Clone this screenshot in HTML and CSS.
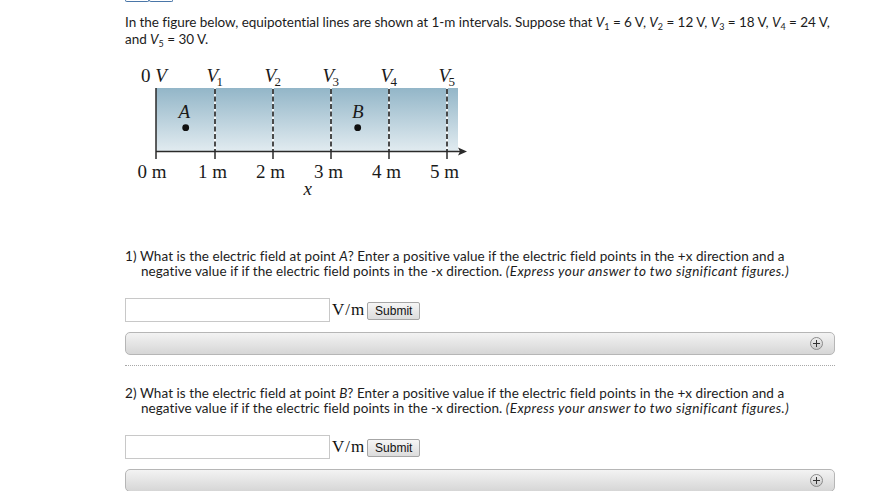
FILE: index.html
```html
<!DOCTYPE html>
<html>
<head>
<meta charset="utf-8">
<link rel="stylesheet" href="styles.css">
</head>
<body>
<div class="page">
  <div class="tabs"><span class="tab"></span><span class="tab"></span></div>
  <p class="intro">In the figure below, equipotential lines are shown at 1-m intervals. Suppose that <i>V</i><sub>1</sub> = 6 V, <i>V</i><sub>2</sub> = 12 V, <i>V</i><sub>3</sub> = 18 V, <i>V</i><sub>4</sub> = 24 V,<br>and <i>V</i><sub>5</sub> = 30 V.</p>

  <svg class="figure" width="350" height="145" viewBox="125 58 350 145" xmlns="http://www.w3.org/2000/svg">
    <defs>
      <linearGradient id="band" x1="0" y1="0" x2="0" y2="1">
        <stop offset="0" stop-color="#93b6c8"/>
        <stop offset="1" stop-color="#e1ebf0"/>
      </linearGradient>
    </defs>
    <rect x="156" y="88" width="302" height="63" fill="url(#band)"/>
    <g stroke="#ffffff" stroke-width="1.6">
      <line x1="215" y1="88" x2="215" y2="151"/>
      <line x1="273" y1="88" x2="273" y2="151"/>
      <line x1="331" y1="88" x2="331" y2="151"/>
      <line x1="389" y1="88" x2="389" y2="151"/>
      <line x1="447" y1="88" x2="447" y2="151"/>
    </g>
    <g stroke="#1e1e1e" stroke-width="1.6" stroke-dasharray="5 2.5">
      <line x1="215" y1="89" x2="215" y2="151"/>
      <line x1="273" y1="89" x2="273" y2="151"/>
      <line x1="331" y1="89" x2="331" y2="151"/>
      <line x1="389" y1="89" x2="389" y2="151"/>
      <line x1="447" y1="89" x2="447" y2="151"/>
    </g>
    <g stroke="#2a2a2a" stroke-width="1.5" fill="none">
      <line x1="156" y1="88" x2="156" y2="159"/>
      <line x1="156" y1="151.5" x2="461" y2="151.5"/>
      <line x1="215" y1="151" x2="215" y2="159"/>
      <line x1="273" y1="151" x2="273" y2="159"/>
      <line x1="331" y1="151" x2="331" y2="159"/>
      <line x1="389" y1="151" x2="389" y2="159"/>
      <line x1="447" y1="151" x2="447" y2="159"/>
    </g>
    <path d="M467 151.5 L458 147.5 L460 151.5 L458 155.5 Z" fill="#2a2a2a"/>
    <circle cx="185.7" cy="127.7" r="3.4" fill="#111"/>
    <circle cx="357.7" cy="127.7" r="3.4" fill="#111"/>
    <g class="fig-text">
      <text x="141" y="81.5">0 <tspan font-style="italic">V</tspan></text>
      <text x="206.5" y="81.5"><tspan font-style="italic">V</tspan><tspan class="fsub" dx="-1.5" dy="4">1</tspan></text>
      <text x="264.5" y="81.5"><tspan font-style="italic">V</tspan><tspan class="fsub" dx="-1.5" dy="4">2</tspan></text>
      <text x="322.5" y="81.5"><tspan font-style="italic">V</tspan><tspan class="fsub" dx="-1.5" dy="4">3</tspan></text>
      <text x="380.5" y="81.5"><tspan font-style="italic">V</tspan><tspan class="fsub" dx="-1.5" dy="4">4</tspan></text>
      <text x="438.5" y="81.5"><tspan font-style="italic">V</tspan><tspan class="fsub" dx="-1.5" dy="4">5</tspan></text>
      <text x="178.5" y="118" font-style="italic">A</text>
      <text x="352" y="118" font-style="italic">B</text>
      <text x="137.5" y="177.5">0 m</text>
      <text x="198" y="177.5">1 m</text>
      <text x="256" y="177.5">2 m</text>
      <text x="314" y="177.5">3 m</text>
      <text x="372" y="177.5">4 m</text>
      <text x="430" y="177.5">5 m</text>
      <text x="303.5" y="195" font-style="italic">x</text>
    </g>
  </svg>

  <div class="part">
    <p class="question">1) What is the electric field at point <i>A</i>? Enter a positive value if the electric field points in the +x direction and a<br>negative value if if the electric field points in the -x direction. <i class="note">(Express your answer to two significant figures.)</i></p>
    <div class="answer">
      <input class="field" type="text">
      <span class="unit">V/m</span>
      <button class="submit" type="button">Submit</button>
    </div>
    <div class="hint-bar"><span class="plus"></span></div>
    <div class="divider"></div>
  </div>

  <div class="part">
    <p class="question">2) What is the electric field at point <i>B</i>? Enter a positive value if the electric field points in the +x direction and a<br>negative value if if the electric field points in the -x direction. <i class="note">(Express your answer to two significant figures.)</i></p>
    <div class="answer">
      <input class="field" type="text">
      <span class="unit">V/m</span>
      <button class="submit" type="button">Submit</button>
    </div>
    <div class="hint-bar"><span class="plus"></span></div>
    <div class="divider"></div>
  </div>
</div>
</body>
</html>
```

FILE: styles.css
```css
html, body {
  margin: 0;
  padding: 0;
  background: #ffffff;
}
body {
  font-family: "Lato", "DejaVu Sans", sans-serif;
  font-size: 13.5px;
  font-variant-ligatures: none;
  color: #1c1c1c;
  overflow: hidden;
}
.page {
  width: 710px;
  padding-left: 125px;
}
.tabs {
  display: flex;
  height: 3px;
}
.tab {
  width: 22px;
  height: 1px;
  border: 1px solid #4a76a8;
  border-top: none;
  border-radius: 0 0 3px 3px;
}
.intro {
  margin: 11px 0 0 0;
  line-height: 17px;
  white-space: nowrap;
  letter-spacing: -0.04px;
}
.intro sub, .question sub {
  font-size: 9px;
  line-height: 0;
  vertical-align: -3px;
}
.figure {
  display: block;
  margin-top: 10px;
}
.fig-text text {
  font-family: "Liberation Serif", "Times New Roman", serif;
  font-size: 19px;
  fill: #1a1a1a;
}
.fig-text .fsub {
  font-size: 13px;
}
.part {
  display: flex;
  flex-direction: column;
}
.figure + .part {
  margin-top: 46px;
}
.question {
  margin: 0;
  line-height: 15px;
  padding-left: 16px;
  text-indent: -16px;
  white-space: nowrap;
  letter-spacing: 0.06px;
}
.note {
  letter-spacing: 0.4px;
}
.answer {
  display: flex;
  align-items: center;
  margin-top: 19px;
  height: 24px;
}
.field {
  box-sizing: border-box;
  width: 205px;
  height: 24px;
  margin: 0;
  border: 1px solid #c8c8c8;
  padding: 0 4px;
  font-size: 13px;
  outline: none;
}
.unit {
  font-family: "Liberation Serif", "Times New Roman", serif;
  font-size: 17px;
  letter-spacing: 1px;
  color: #111;
  margin-left: 2px;
}
.submit {
  box-sizing: border-box;
  height: 18px;
  width: 53px;
  margin: 1px 0 0 2px;
  padding: 0;
  font-family: "Liberation Sans", Arial, sans-serif;
  font-size: 12px;
  color: #111;
  border: 1px solid #a6a6a6;
  border-radius: 2px;
  background: linear-gradient(#f6f6f6, #dcdcdc);
}
.hint-bar {
  box-sizing: border-box;
  margin-top: 10px;
  height: 23px;
  border: 1px solid #b6b6b6;
  border-radius: 5px;
  background: linear-gradient(#f3f3f3, #d6d6d6);
  display: flex;
  align-items: center;
  justify-content: flex-end;
  padding-right: 11px;
}
.plus {
  position: relative;
  box-sizing: border-box;
  width: 13px;
  height: 13px;
  border-radius: 50%;
  border: 1px solid #8a8a8a;
  background: linear-gradient(#efefef, #c9c9c9);
}
.plus::before, .plus::after {
  content: "";
  position: absolute;
  background: #333;
}
.plus::before {
  left: 2px;
  right: 2px;
  top: 5px;
  height: 1px;
}
.plus::after {
  top: 2px;
  bottom: 2px;
  left: 5px;
  width: 1px;
}
.divider {
  margin-top: 10px;
  border-top: 1px dotted #a8a8a8;
  margin-bottom: 20px;
}
```
